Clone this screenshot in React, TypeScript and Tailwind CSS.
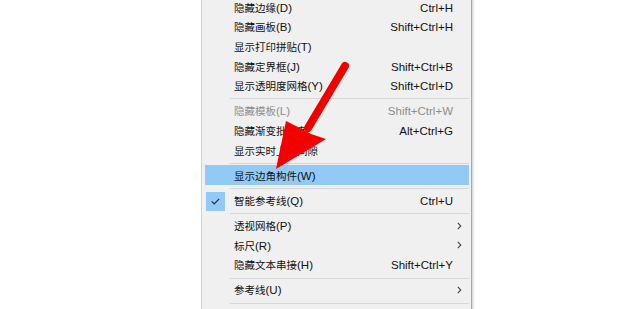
import React from 'react';

type Item =
  | { sep: true }
  | {
      sep?: false;
      label: string;
      key?: string;
      shortcut?: string;
      sub?: boolean;
      disabled?: boolean;
      active?: boolean;
      checked?: boolean;
    };

const items: Item[] = [
  { label: '隐藏边缘', key: '(D)', shortcut: 'Ctrl+H' },
  { label: '隐藏画板', key: '(B)', shortcut: 'Shift+Ctrl+H' },
  { label: '显示打印拼贴', key: '(T)' },
  { label: '隐藏定界框', key: '(J)', shortcut: 'Shift+Ctrl+B' },
  { label: '显示透明度网格', key: '(Y)', shortcut: 'Shift+Ctrl+D' },
  { sep: true },
  { label: '隐藏模板', key: '(L)', shortcut: 'Shift+Ctrl+W', disabled: true },
  { label: '隐藏渐变批注者', shortcut: 'Alt+Ctrl+G' },
  { label: '显示实时上色间隙' },
  { sep: true },
  { label: '显示边角构件', key: '(W)', active: true },
  { sep: true },
  { label: '智能参考线', key: '(Q)', shortcut: 'Ctrl+U', checked: true },
  { sep: true },
  { label: '透视网格', key: '(P)', sub: true },
  { label: '标尺', key: '(R)', sub: true },
  { label: '隐藏文本串接', key: '(H)', shortcut: 'Shift+Ctrl+Y' },
  { sep: true },
  { label: '参考线', key: '(U)', sub: true },
  { sep: true },
];

const MenuRow: React.FC<{ item: Exclude<Item, { sep: true }> }> = ({ item }) => {
  const tone = item.disabled ? 'text-[#8d8d8d]' : 'text-[#111]';
  return (
    <div
      className={`relative flex items-center h-[19.6px] ml-[3px] mr-[2px] pl-[29px] ${
        item.active ? 'bg-[#91c9f7]' : ''
      } ${tone}`}
    >
      {item.checked && (
        <div className="absolute left-[1px] top-[1px] w-[19px] h-[19.3px] bg-[#91c9f7] flex items-center justify-center">
          <svg width="9" height="7" viewBox="0 0 9 7">
            <polyline points="0.8,3.4 3.2,5.8 8.2,0.8" fill="none" stroke="#2b2b2b" strokeWidth="1.2" />
          </svg>
        </div>
      )}
      <div className="flex-1 flex items-baseline -mt-[1px]">
        <span className="whitespace-nowrap leading-[12px]">
          <span className="text-[10.5px] leading-[12px] font-['Noto_Sans_CJK_SC',sans-serif]">{item.label}</span>
          {item.key && (
            <span className="text-[11.5px] leading-[12px] font-['Liberation_Sans',sans-serif]">{item.key}</span>
          )}
        </span>
        {item.shortcut && (
          <span className="ml-auto pr-[16px] text-[11.5px] leading-[12px] font-['Liberation_Sans',sans-serif] whitespace-nowrap">
            {item.shortcut}
          </span>
        )}
      </div>
      {item.sub && (
        <svg className="mr-[7px]" width="5" height="8" viewBox="0 0 5 8">
          <polyline points="0.8,0.8 3.8,4 0.8,7.2" fill="none" stroke="#444" strokeWidth="1.1" />
        </svg>
      )}
    </div>
  );
};

export default function App() {
  return (
    <div className="relative w-[620px] h-[309px] bg-white overflow-hidden">
      <div className="ml-[201px] w-[274px] h-full flex">
        <div className="w-[271px] h-full bg-[#f0f0f0] border-l border-r border-l-[#d5d5d5] border-r-[#a8a8a8] overflow-hidden">
          <div className="-mt-[2.5px]">
            {items.map((item, i) =>
              item.sep ? (
                <div key={i} className="h-[5.6px] pt-[3px] ml-[28px] mr-[2px]">
                  <div className="h-px bg-[#d7d7d7]" />
                </div>
              ) : (
                <MenuRow key={i} item={item} />
              )
            )}
          </div>
        </div>
        <div className="w-[3px] h-full bg-gradient-to-r from-[#d6d6d6] to-white" />
      </div>

      {/* red annotation arrow */}
      <svg className="absolute left-0 top-0 pointer-events-none" width="620" height="309" viewBox="0 0 620 309">
        <line x1="345" y1="66" x2="308" y2="128" stroke="#f20000" strokeWidth="8" strokeLinecap="round" />
        <polygon points="276,169 286,121 302,129 311,134 326,139" fill="#f50000" />
      </svg>
    </div>
  );
}
